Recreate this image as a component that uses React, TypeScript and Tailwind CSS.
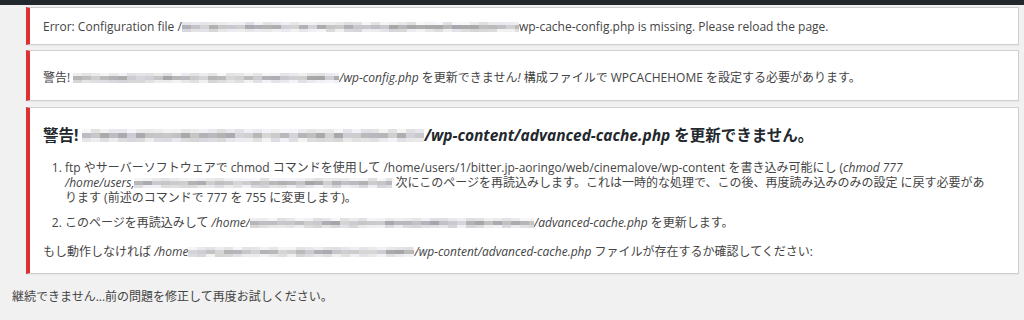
import React from "react";

function Mosaic({ w, h = 10, seed = 1 }: { w: number; h?: number; seed?: number }) {
  const cell = 9;
  const cols = Math.ceil(w / cell);
  let s = seed * 9301 + 49297;
  const rnd = () => {
    s = (s * 9301 + 49297) % 233280;
    return s / 233280;
  };
  const ranges: [number, number][] = [
    [222, 248],
    [165, 215],
    [212, 244],
  ];
  const rows = ranges.map(([lo, hi]) =>
    Array.from({ length: cols }).map(() => {
      const v = Math.round(lo + rnd() * (hi - lo));
      const tint = rnd() > 0.6 ? 6 : 0;
      return `rgb(${v},${v},${Math.min(255, v + tint)})`;
    })
  );
  const hs = [Math.round(h * 0.3), Math.round(h * 0.4), h - Math.round(h * 0.3) - Math.round(h * 0.4)];
  return (
    <span
      className="inline-block align-middle overflow-hidden relative -top-[1px]"
      style={{ width: w, height: h }}
    >
      <span className="flex flex-col w-full h-full blur-[0.6px]">
        {rows.map((row, ri) => (
          <span key={ri} className="flex shrink-0" style={{ height: hs[ri] }}>
            {row.map((c, ci) => (
              <span
                key={ci}
                className="block h-full shrink-0"
                style={{ width: cell, background: c }}
              />
            ))}
          </span>
        ))}
      </span>
    </span>
  );
}

const font = "font-['Segoe_UI','Open_Sans','Noto_Sans_CJK_JP',sans-serif]";

export default function App() {
  return (
    <div className={`w-[1024px] h-[320px] bg-[#f1f1f1] overflow-hidden text-[#444] ${font}`}>
      <div className="h-[5px] bg-[#23282d]" />
      <div className="pl-[26px] pr-[5px]">
        {/* Notice 1 */}
        <div className="mt-[2px] bg-white border border-[#ccd0d4] border-l-4 border-l-[#dc3232] shadow-[0_1px_1px_rgba(0,0,0,0.04)] pl-[13px] pt-[11px] pb-[9px]">
          <p className="text-[12px] leading-[16px] whitespace-nowrap">
            Error: Configuration file /<Mosaic w={337} seed={3} />wp-cache-config.php is missing. Please reload the page.
          </p>
        </div>
        {/* Notice 2 */}
        <div className="mt-[5px] bg-white border border-[#ccd0d4] border-l-4 border-l-[#dc3232] shadow-[0_1px_1px_rgba(0,0,0,0.04)] pl-[13px] pt-[19px] pb-[14px]">
          <p className="text-[12px] leading-[16px] whitespace-nowrap">
            警告! <Mosaic w={266} seed={7} />
            <em>/wp-config.php</em> を更新できません<em>!</em> 構成ファイルで WPCACHEHOME を設定する必要があります。
          </p>
        </div>
        {/* Notice 3 */}
        <div className="mt-[6px] bg-white border border-[#ccd0d4] border-l-4 border-l-[#dc3232] shadow-[0_1px_1px_rgba(0,0,0,0.04)] pl-[13px] pt-[17px] pb-[14px]">
          <h4 className="text-[15.5px] leading-[20px] font-bold text-[#23282d] whitespace-nowrap">
            警告! <Mosaic w={342} h={13} seed={11} />
            <em>/wp-content/advanced-cache.php</em> を更新できません。
          </h4>
          <ol className="list-decimal pl-[22px] mt-[15px] text-[12px] leading-[15px] whitespace-nowrap">
            <li>
              ftp やサーバーソフトウェアで chmod コマンドを使用して /home/users/1/bitter.jp-aoringo/web/cinemalove/wp-content を書き込み可能にし (<em>chmod 777</em>
              <br />
              <em>/home/users,</em>
              <Mosaic w={258} seed={5} /> 次にこのページを再読込みします。これは一時的な処理で、この後、再度読み込みのみの設定 に戻す必要があ
              <br />
              ります (前述のコマンドで 777 を 755 に変更します)。
            </li>
            <li className="mt-[10px]">
              このページを再読込みして <em>/home/</em>
              <Mosaic w={284} seed={13} />
              <em>/advanced-cache.php</em> を更新します。
            </li>
          </ol>
          <p className="mt-[14px] text-[12px] leading-[15px] whitespace-nowrap">
            もし動作しなければ <em>/home</em>
            <Mosaic w={226} seed={17} />
            <em>/wp-content/advanced-cache.php</em> ファイルが存在するか確認してください:
          </p>
        </div>
      </div>
      <p className="mt-[15px] pl-[12px] text-[12px] leading-[16px]">
        継続できません...前の問題を修正して再度お試しください。
      </p>
    </div>
  );
}
